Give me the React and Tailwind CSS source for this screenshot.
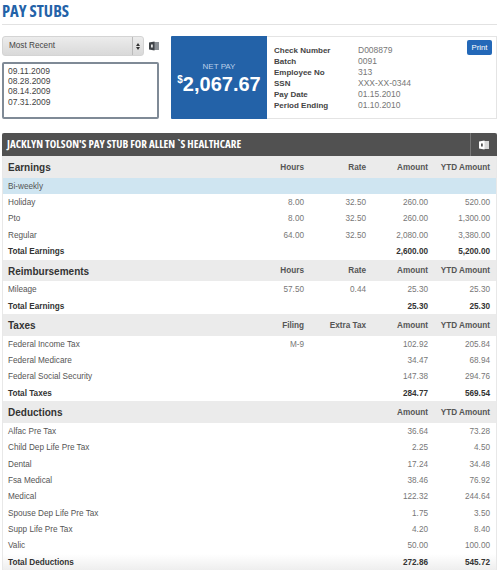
const sans = "font-['Liberation_Sans',Arial,sans-serif]";

const ExcelIcon = ({ light }) => (
    <svg width="10" height="10" viewBox="0 0 10 10">
        <rect x="4" y="1" width="6" height="8" fill={light ? '#d8d8d8' : '#8a8f94'} />
        <path d="M0 1.5 L5.5 0.5 V9.5 L0 8.5 Z" fill={light ? '#ffffff' : '#3f4347'} />
        <rect x="2" y="3.5" width="1.8" height="3" fill={light ? '#555555' : '#e8e8e8'} />
    </svg>
);

const sections = [
    {
        title: 'Earnings',
        cols: ['Hours', 'Rate', 'Amount', 'YTD Amount'],
        band: 'Bi-weekly',
        rows: [
            ['Holiday', '8.00', '32.50', '260.00', '520.00'],
            ['Pto', '8.00', '32.50', '260.00', '1,300.00'],
            ['Regular', '64.00', '32.50', '2,080.00', '3,380.00'],
        ],
        total: ['Total Earnings', '', '', '2,600.00', '5,200.00'],
    },
    {
        title: 'Reimbursements',
        cols: ['Hours', 'Rate', 'Amount', 'YTD Amount'],
        rows: [['Mileage', '57.50', '0.44', '25.30', '25.30']],
        total: ['Total Earnings', '', '', '25.30', '25.30'],
    },
    {
        title: 'Taxes',
        cols: ['Filing', 'Extra Tax', 'Amount', 'YTD Amount'],
        rows: [
            ['Federal Income Tax', 'M-9', '', '102.92', '205.84'],
            ['Federal Medicare', '', '', '34.47', '68.94'],
            ['Federal Social Security', '', '', '147.38', '294.76'],
        ],
        total: ['Total Taxes', '', '', '284.77', '569.54'],
    },
    {
        title: 'Deductions',
        cols: ['', '', 'Amount', 'YTD Amount'],
        rows: [
            ['Alfac Pre Tax', '', '', '36.64', '73.28'],
            ['Child Dep Life Pre Tax', '', '', '2.25', '4.50'],
            ['Dental', '', '', '17.24', '34.48'],
            ['Fsa Medical', '', '', '38.46', '76.92'],
            ['Medical', '', '', '122.32', '244.64'],
            ['Spouse Dep Life Pre Tax', '', '', '1.75', '3.50'],
            ['Supp Life Pre Tax', '', '', '4.20', '8.40'],
            ['Valic', '', '', '50.00', '100.00'],
        ],
        total: ['Total Deductions', '', '', '272.86', '545.72'],
        fade: true,
    },
];

const Row = ({ cells, total, fade }) => (
    <div className={`grid grid-cols-[1fr_62px_62px_62px_62px] items-center h-[16.4px] pt-[2px] pl-[5px] pr-[6px] text-[8.2px] ${total ? 'font-bold text-[#333]' : 'text-[#777]'} ${fade ? 'bg-gradient-to-b from-white to-[#eeeeee]' : ''}`}>
        {cells.map((c, i) => (
            <span key={i} className={i === 0 ? `whitespace-nowrap ${total ? '' : 'text-[#555]'}` : 'text-right whitespace-nowrap'}>{c}</span>
        ))}
    </div>
);

const Section = ({ s }) => (
    <div>
        <div className="grid grid-cols-[1fr_62px_62px_62px_62px] items-center h-[21.6px] pt-[2px] pl-[5px] pr-[6px] bg-[#ebebeb]">
            <span className="text-[10px] font-bold text-[#333]">{s.title}</span>
            {s.cols.map((c, i) => (
                <span key={i} className="text-right text-[8.2px] font-bold text-[#555] whitespace-nowrap">{c}</span>
            ))}
        </div>
        {s.band && (
            <div className="h-[16.4px] flex items-center pt-[2px] pl-[5px] bg-[#cfe5f1] text-[8.2px] text-[#555]">{s.band}</div>
        )}
        {s.rows.map((r) => (
            <Row key={r[0]} cells={r} />
        ))}
        <Row cells={s.total} total fade={s.fade} />
    </div>
);

export default function App() {
    const details = [
        ['Check Number', 'D008879'],
        ['Batch', '0091'],
        ['Employee No', '313'],
        ['SSN', 'XXX-XX-0344'],
        ['Pay Date', '01.15.2010'],
        ['Period Ending', '01.10.2010'],
    ];

    return (
        <div className={`w-[499px] h-[570px] overflow-hidden bg-white ${sans}`}>
            <div className="mx-[2px] h-[25px] border-b border-[#e2e2e2]">
                <h1 className="font-['Open_Sans',sans-serif] [font-stretch:75%] font-bold text-[16.5px] leading-[21px] text-[#2362a8]">PAY STUBS</h1>
            </div>

            <div className="flex mt-[11px] mx-[2px] h-[83px]">
                <div className="w-[157px] flex flex-col">
                    <div className="flex items-center">
                        <div className="w-[142px] h-[20px] flex items-center justify-between pl-[6px] rounded-[3px] border border-[#d4d4d4] bg-gradient-to-b from-[#ececec] to-[#d9d9d9] text-[8.2px] text-[#444]">
                            <span>Most Recent</span>
                            <span className="w-[11px] h-full border-l border-[#bbb] flex flex-col items-center justify-center gap-px">
                                <svg width="4" height="3" viewBox="0 0 4 3"><path d="M2 0 L4 3 H0 Z" fill="#333" /></svg>
                                <svg width="4" height="3" viewBox="0 0 4 3"><path d="M0 0 H4 L2 3 Z" fill="#333" /></svg>
                            </span>
                        </div>
                        <span className="ml-[5px]"><ExcelIcon /></span>
                    </div>
                    <div className="mt-[6px] h-[57px] border-2 border-[#7f8a96] rounded-[2px] pl-[4px] pt-[2px] text-[8.5px] leading-[10.2px] text-[#444]">
                        <div>09.11.2009</div>
                        <div>08.28.2009</div>
                        <div>08.14.2009</div>
                        <div>07.31.2009</div>
                    </div>
                </div>

                <div className="ml-[12px] w-[96px] bg-[#2362a8] rounded-l-[1px] flex flex-col items-center justify-center text-white">
                    <span className="text-[8px] text-[#b9cfe8] mt-[1px]">NET PAY</span>
                    <span className="flex items-start font-bold leading-[24px] text-[20px] -mt-[1px]">
                        <span className="text-[10px] leading-[16px]">$</span>2,067.67
                    </span>
                </div>

                <div className="relative flex-1 border border-[#e4e4e4] border-l-0 pl-[7px] flex items-center">
                    <div className="grid grid-cols-[84px_auto] text-[8px] leading-[11px]">
                        {details.map(([k, v]) => (
                            <div key={k} className="contents">
                                <span className="font-bold text-[#444]">{k}</span>
                                <span className="text-[#777] text-[8.5px]">{v}</span>
                            </div>
                        ))}
                    </div>
                    <button className="absolute top-[3px] right-[4px] w-[25px] h-[15px] rounded-[2px] bg-[#2368b8] text-white text-[7.8px]">Print</button>
                </div>
            </div>

            <div className="mt-[14px] mx-[2px] border-x border-[#e8e8e8]">
                <div className="-mx-px h-[23px] flex items-center justify-between bg-[#515151] rounded-t-[2px]">
                    <span className="pl-[5px] font-['Open_Sans',sans-serif] [font-stretch:75%] font-bold text-[11px] text-white whitespace-nowrap">JACKLYN TOLSON'S PAY STUB FOR ALLEN `S HEALTHCARE</span>
                    <span className="w-[27px] h-full border-l border-[#777] flex items-center justify-center"><ExcelIcon light /></span>
                </div>
                {sections.map((s) => (
                    <Section key={s.title} s={s} />
                ))}
            </div>
        </div>
    );
}
